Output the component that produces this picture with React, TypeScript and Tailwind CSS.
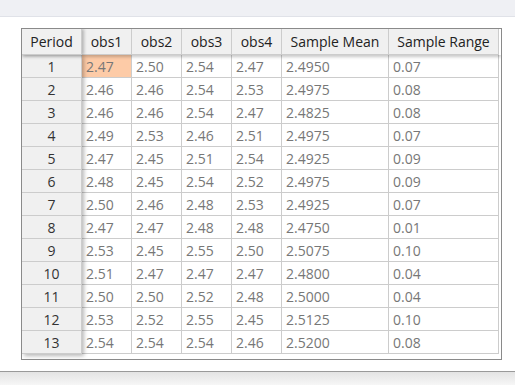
import React from "react";

const rows = [
  ["2.47", "2.50", "2.54", "2.47", "2.4950", "0.07"],
  ["2.46", "2.46", "2.54", "2.53", "2.4975", "0.08"],
  ["2.46", "2.46", "2.54", "2.47", "2.4825", "0.08"],
  ["2.49", "2.53", "2.46", "2.51", "2.4975", "0.07"],
  ["2.47", "2.45", "2.51", "2.54", "2.4925", "0.09"],
  ["2.48", "2.45", "2.54", "2.52", "2.4975", "0.09"],
  ["2.50", "2.46", "2.48", "2.53", "2.4925", "0.07"],
  ["2.47", "2.47", "2.48", "2.48", "2.4750", "0.01"],
  ["2.53", "2.45", "2.55", "2.50", "2.5075", "0.10"],
  ["2.51", "2.47", "2.47", "2.47", "2.4800", "0.04"],
  ["2.50", "2.50", "2.52", "2.48", "2.5000", "0.04"],
  ["2.53", "2.52", "2.55", "2.45", "2.5125", "0.10"],
  ["2.54", "2.54", "2.54", "2.46", "2.5200", "0.08"],
];

const headers = ["obs1", "obs2", "obs3", "obs4", "Sample Mean", "Sample Range"];

const cols = "grid grid-cols-[50px_50px_50px_50px_107px_110px]";

const App = () => {
  return (
    <div className="w-[515px] h-[385px] bg-white flex flex-col font-['Open_Sans',sans-serif] text-[14px]">
      <div className="h-[17px] bg-[#eff0f4] border-b border-[#e0e2e8]" />

      <div className="mt-[11px] ml-[21px] w-[481px] h-[332px] border border-[#8a8a8a] overflow-hidden">
        {/* column header row */}
        <div className="relative z-20 flex shadow-[0_2px_3px_rgba(0,0,0,0.22)]">
          <div className="w-[60px] h-[26px] bg-[#f0f0f0] border-r border-b border-[#ccc] flex items-center justify-center text-[#222] shadow-[2px_0_3px_rgba(0,0,0,0.25)] relative z-10">
            Period
          </div>
          <div className={cols}>
            {headers.map((h) => (
              <div
                key={h}
                className="h-[26px] bg-[#f0f0f0] border-r border-b border-[#ccc] flex items-center justify-center text-[#222]"
              >
                {h}
              </div>
            ))}
          </div>
        </div>

        <div className="flex">
          {/* row headers */}
          <div className="relative z-10 w-[60px] flex flex-col shadow-[2px_2px_4px_rgba(0,0,0,0.28)]">
            {rows.map((_, i) => (
              <div
                key={i}
                className="h-[23px] bg-[#f0f0f0] border-r border-b border-[#ccc] flex items-center justify-center text-[#333]"
              >
                {i + 1}
              </div>
            ))}
          </div>

          <div className="flex flex-col">
            {rows.map((r, i) => (
              <div key={i} className={cols}>
                {r.map((v, j) => (
                  <div
                    key={j}
                    className={
                      "h-[23px] border-r border-b border-[#ccc] flex items-center pl-[4px] text-[#777] " +
                      (i === 0 && j === 0 ? "bg-[#fdcba7]" : "bg-white")
                    }
                  >
                    {v}
                  </div>
                ))}
              </div>
            ))}
          </div>
        </div>
      </div>

      <div className="mt-[11px] h-[14px] border-t border-[#9a9a9a] bg-gradient-to-b from-[#e4e4e4] to-[#f6f6f6]" />
    </div>
  );
};

export default App;
